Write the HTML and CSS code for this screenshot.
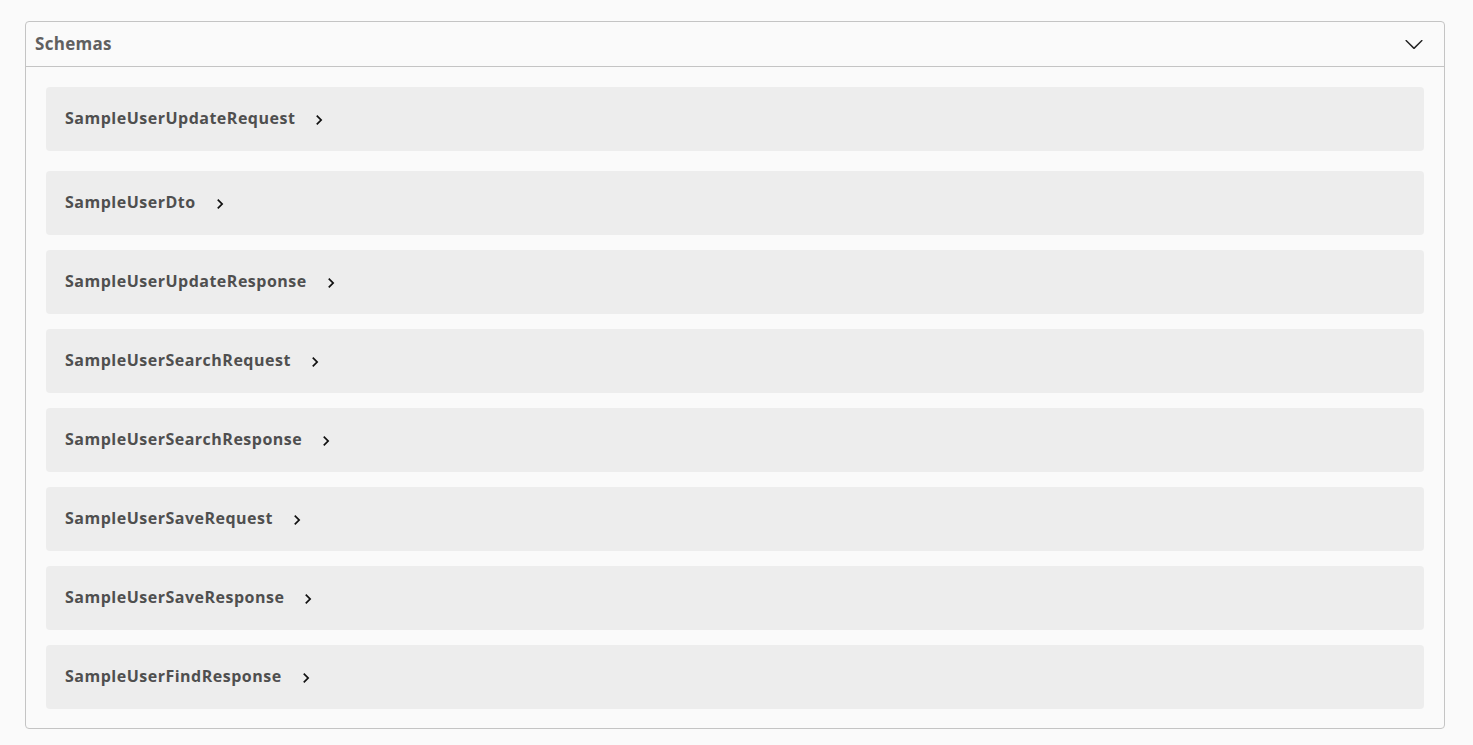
FILE: index.html
```html
<!DOCTYPE html>
<html lang="en">
<head>
  <meta charset="UTF-8" />
  <meta name="viewport" content="width=device-width, initial-scale=1.0"/>
  <title>Schemas</title>
  <link rel="stylesheet" href="styles.css">
</head>
<body>
  <section class="models">
    <div class="models-header">
      <span class="models-title">Schemas</span>
      <svg class="arrow-down" width="20" height="20" viewBox="0 0 20 20">
        <path d="M17.418 6.109c.272-.268.709-.268.979 0s.271.701 0 .969l-7.908 7.83c-.27.268-.707.268-.979 0l-7.908-7.83c-.27-.268-.27-.701 0-.969.271-.268.709-.268.979 0L10 13.25l7.418-7.141z"/>
      </svg>
    </div>

    <div class="models-list">
      <div class="model-container first">
        <span class="model-title">SampleUserUpdateRequest</span>
        <svg class="model-toggle" width="20" height="20" viewBox="0 0 24 24"><path d="M10 6L8.59 7.41 13.17 12l-4.58 4.59L10 18l6-6z"/></svg>
      </div>
      <div class="model-container">
        <span class="model-title">SampleUserDto</span>
        <svg class="model-toggle" width="20" height="20" viewBox="0 0 24 24"><path d="M10 6L8.59 7.41 13.17 12l-4.58 4.59L10 18l6-6z"/></svg>
      </div>
      <div class="model-container">
        <span class="model-title">SampleUserUpdateResponse</span>
        <svg class="model-toggle" width="20" height="20" viewBox="0 0 24 24"><path d="M10 6L8.59 7.41 13.17 12l-4.58 4.59L10 18l6-6z"/></svg>
      </div>
      <div class="model-container">
        <span class="model-title">SampleUserSearchRequest</span>
        <svg class="model-toggle" width="20" height="20" viewBox="0 0 24 24"><path d="M10 6L8.59 7.41 13.17 12l-4.58 4.59L10 18l6-6z"/></svg>
      </div>
      <div class="model-container">
        <span class="model-title">SampleUserSearchResponse</span>
        <svg class="model-toggle" width="20" height="20" viewBox="0 0 24 24"><path d="M10 6L8.59 7.41 13.17 12l-4.58 4.59L10 18l6-6z"/></svg>
      </div>
      <div class="model-container">
        <span class="model-title">SampleUserSaveRequest</span>
        <svg class="model-toggle" width="20" height="20" viewBox="0 0 24 24"><path d="M10 6L8.59 7.41 13.17 12l-4.58 4.59L10 18l6-6z"/></svg>
      </div>
      <div class="model-container">
        <span class="model-title">SampleUserSaveResponse</span>
        <svg class="model-toggle" width="20" height="20" viewBox="0 0 24 24"><path d="M10 6L8.59 7.41 13.17 12l-4.58 4.59L10 18l6-6z"/></svg>
      </div>
      <div class="model-container">
        <span class="model-title">SampleUserFindResponse</span>
        <svg class="model-toggle" width="20" height="20" viewBox="0 0 24 24"><path d="M10 6L8.59 7.41 13.17 12l-4.58 4.59L10 18l6-6z"/></svg>
      </div>
    </div>
  </section>
</body>
</html>
```

FILE: styles.css
```css
body {
  background-color: #fafafa;
  font-family: "Open Sans", sans-serif;
  margin: 0;
  padding: 21px 28px 0 25px;
}

.models {
  border: 1px solid #c4c4c4;
  border-radius: 4px;
}

.models-header {
  display: flex;
  align-items: center;
  justify-content: space-between;
  height: 44px;
  padding: 0 20px 0 9px;
  border-bottom: 1px solid #c4c4c4;
}

.models-title {
  font-size: 17px;
  font-weight: 700;
  letter-spacing: 0.3px;
  color: #606060;
  margin-top: -2px;
}

.arrow-down {
  fill: #222;
}

.models-list {
  display: flex;
  flex-direction: column;
  gap: 15px;
  padding: 20px 20px 19px;
}

.model-container {
  display: flex;
  align-items: center;
  height: 64px;
  padding: 0 19px;
  background-color: #ededed;
  border-radius: 4px;
}

.model-container.first {
  margin-bottom: 5px;
}

.model-title {
  font-size: 16px;
  font-weight: 700;
  letter-spacing: 0.5px;
  color: #4f4f4f;
  margin-top: -2px;
}

.model-toggle {
  margin-left: 14px;
  margin-top: 2px;
  fill: #111;
}
```
